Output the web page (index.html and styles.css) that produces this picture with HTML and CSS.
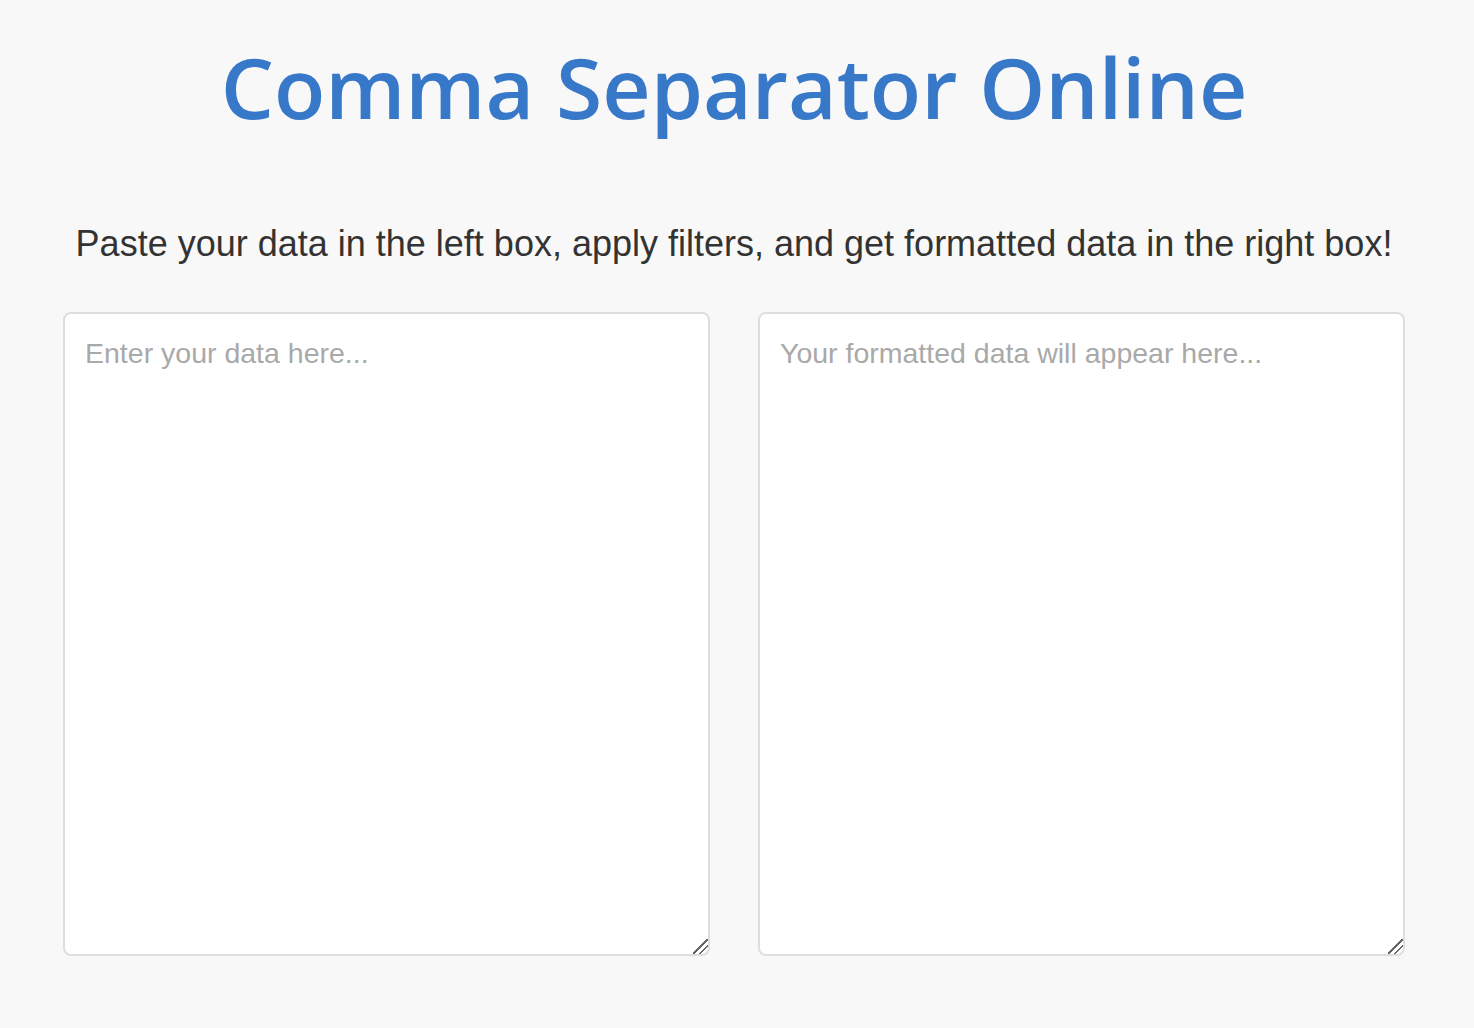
FILE: index.html
```html
<!DOCTYPE html>
<html lang="en">
<head>
<meta charset="utf-8">
<title>Comma Separator Online</title>
<link rel="stylesheet" href="styles.css">
</head>
<body>
<main class="page">
  <h1 class="title">Comma Separator Online</h1>
  <p class="subtitle">Paste your data in the left box, apply filters, and get formatted data in the right box!</p>
  <div class="boxes">
    <textarea class="box" placeholder="Enter your data here..."></textarea>
    <textarea class="box" placeholder="Your formatted data will appear here..." readonly></textarea>
  </div>
</main>
</body>
</html>
```
FILE: styles.css
```css
html, body {
  margin: 0;
  padding: 0;
  background: #f8f8f8;
}
body {
  font-family: "Liberation Sans", Arial, sans-serif;
  color: #333;
}
.page {
  width: 1342px;
  margin: 0 0 0 63px;
  display: flex;
  flex-direction: column;
  align-items: center;
}
.title {
  margin: 34px 0 0;
  font-family: "Open Sans", sans-serif;
  font-weight: 600;
  font-size: 84px;
  line-height: 106px;
  color: #3878c8;
  letter-spacing: 0;
}
.subtitle {
  margin: 82px 0 0;
  font-size: 36px;
  line-height: 44px;
  color: #333;
}
.boxes {
  margin-top: 46px;
  width: 100%;
  display: flex;
  gap: 48px;
}
.box {
  flex: 1;
  height: 644px;
  box-sizing: border-box;
  border: 2px solid #dedede;
  border-radius: 8px;
  background: #fff;
  padding: 21px 20px;
  font-family: "Liberation Sans", Arial, sans-serif;
  font-size: 28.5px;
  line-height: 36px;
  color: #333;
  resize: vertical;
  outline: none;
}
.box::placeholder {
  color: #a9a9a9;
}
.box::-webkit-resizer {
  background: linear-gradient(135deg,
    transparent 0 46%,
    #666 46% 54%,
    transparent 54% 68%,
    #666 68% 76%,
    transparent 76%);
}
```
